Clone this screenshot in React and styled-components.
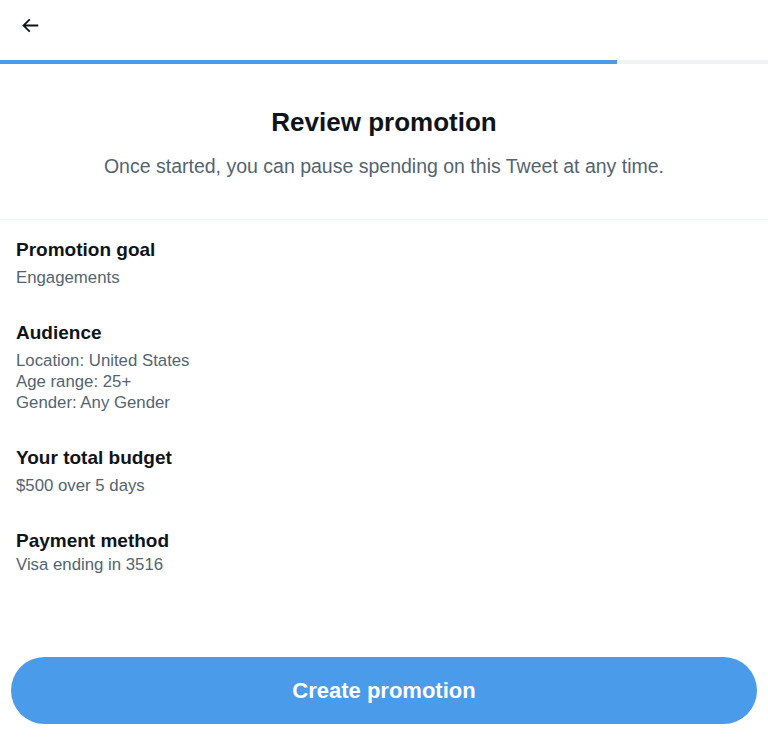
import React from "react";
import styled, { createGlobalStyle } from "styled-components";

const Global = createGlobalStyle`
  html, body { margin: 0; padding: 0; background: #ffffff; }
  body { font-family: "Liberation Sans", Arial, sans-serif; color: #0f1419; }
  * { box-sizing: border-box; }
`;

const Page = styled.div`
  width: 768px;
  height: 740px;
  display: flex;
  flex-direction: column;
  background: #fff;
`;

const TopBar = styled.div`
  height: 60px;
  display: flex;
  align-items: center;
  padding: 0 0 10px 19px;
`;

const BackButton = styled.button`
  border: none;
  background: none;
  padding: 0;
  width: 22px;
  height: 22px;
  display: flex;
  align-items: center;
  justify-content: center;
  color: #0f1419;
  cursor: pointer;
`;

const Progress = styled.div`
  height: 4px;
  background: #eff3f4;
  display: flex;
`;

const ProgressFill = styled.div`
  height: 100%;
  background: #4a9be9;
`;

const Header = styled.div`
  display: flex;
  flex-direction: column;
  align-items: center;
  padding: 42px 16px 0;
  height: 156px;
  border-bottom: 1px solid #eff3f4;
`;

const Title = styled.h1`
  margin: 0;
  font-size: 26px;
  font-weight: 700;
  line-height: 32px;
  color: #0f1419;
`;

const Subtitle = styled.p`
  margin: 16px 0 0;
  font-size: 19.5px;
  line-height: 24px;
  color: #536471;
`;

const Details = styled.div`
  flex: 1;
  display: flex;
  flex-direction: column;
  gap: 32px;
  padding: 17px 16px 0;
`;

const Section = styled.div`
  display: flex;
  flex-direction: column;
`;

const Label = styled.div`
  font-size: 19px;
  font-weight: 700;
  line-height: 26px;
  color: #0f1419;
  margin-bottom: ${(p) => (p.$tight ? "0px" : "4px")};
`;

const Value = styled.div`
  font-size: 16.8px;
  line-height: 21px;
  color: #536471;
`;

const Footer = styled.div`
  padding: 0 11px 16px;
`;

const PrimaryButton = styled.button`
  width: 100%;
  height: 67px;
  border: none;
  border-radius: 34px;
  background: #4a9be9;
  color: #fff;
  font-family: inherit;
  font-size: 22px;
  font-weight: 700;
  cursor: pointer;
`;

const sections = [
  { label: "Promotion goal", values: ["Engagements"] },
  {
    label: "Audience",
    values: ["Location: United States", "Age range: 25+", "Gender: Any Gender"],
  },
  { label: "Your total budget", values: ["$500 over 5 days"] },
  { label: "Payment method", values: ["Visa ending in 3516"], tight: true },
];

export default function App() {
  return (
    <Page>
      <Global />
      <TopBar>
        <BackButton aria-label="Back">
          <svg viewBox="0 0 24 24" width="23" height="23" fill="currentColor">
            <path d="M7.414 13l5.043 5.04-1.414 1.42L3.586 12l7.457-7.46 1.414 1.42L7.414 11H21v2H7.414z" />
          </svg>
        </BackButton>
      </TopBar>
      <Progress>
        <ProgressFill style={{ width: `${(617 / 768) * 100}%` }} />
      </Progress>
      <Header>
        <Title>Review promotion</Title>
        <Subtitle>Once started, you can pause spending on this Tweet at any time.</Subtitle>
      </Header>
      <Details>
        {sections.map((s) => (
          <Section key={s.label}>
            <Label $tight={s.tight}>{s.label}</Label>
            {s.values.map((v) => (
              <Value key={v}>{v}</Value>
            ))}
          </Section>
        ))}
      </Details>
      <Footer>
        <PrimaryButton>Create promotion</PrimaryButton>
      </Footer>
    </Page>
  );
}
